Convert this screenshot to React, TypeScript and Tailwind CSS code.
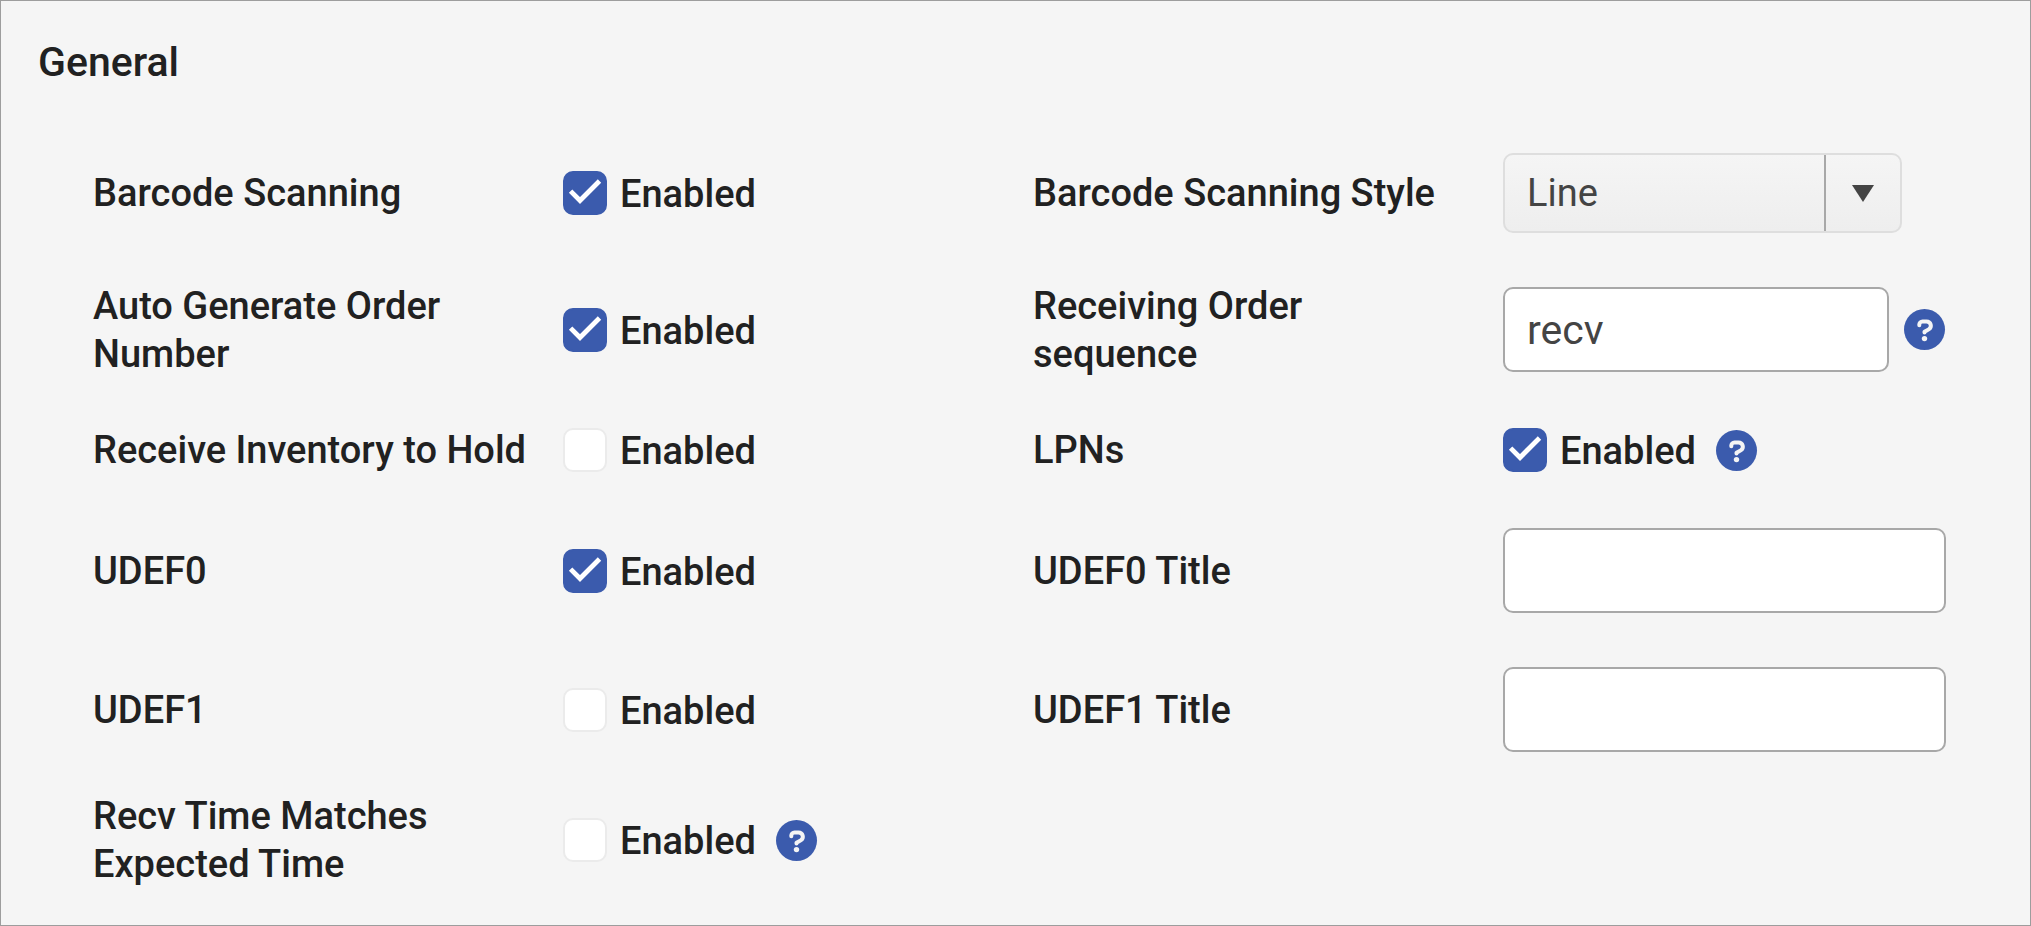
import React, { useId, useState } from 'react';

const inputClass =
  'h-[85px] w-full min-w-0 rounded-[10px] border-2 border-[#a8a8a8] bg-white px-[22px] text-[41px] font-normal text-[#444444] outline-none';

const HelpButton: React.FC = () => (
  <button type="button" aria-label="Help" className="shrink-0 cursor-pointer">
    <svg className="h-[41px] w-[42px]" viewBox="0 0 42 41" fill="none">
      <circle cx="20.5" cy="20.5" r="20.5" fill="#3b5bad" />
      <path
        d="M15.3 16.2v-.6a3.2 3.2 0 0 1 3.2-3.2h4a4.3 4.3 0 0 1 2.2 8L20.5 22.8v.8"
        stroke="#f4f4f4"
        strokeWidth="4"
        strokeLinecap="round"
        strokeLinejoin="round"
      />
      <circle cx="20.5" cy="29.6" r="2.7" fill="#f4f4f4" />
    </svg>
  </button>
);

interface CheckFieldProps {
  label: string;
  defaultChecked?: boolean;
  help?: boolean;
}

const CheckField: React.FC<CheckFieldProps> = ({ label, defaultChecked = false, help }) => {
  const id = useId();
  const [checked, setChecked] = useState(defaultChecked);

  return (
    <>
      <div className="py-[13px] pr-1">{label}</div>
      <div className="flex items-center gap-5 py-[26px]">
        <label htmlFor={id} className="flex cursor-pointer items-center gap-[13px]">
          <span className="grid shrink-0">
            <input
              id={id}
              type="checkbox"
              aria-label={label}
              checked={checked}
              onChange={() => setChecked(!checked)}
              className="col-start-1 row-start-1 h-11 w-11 cursor-pointer appearance-none rounded-[10px] border-2 border-[#ebebeb] bg-white checked:border-[#3b5bad] checked:bg-[#3b5bad]"
            />
            {checked && (
              <svg
                className="pointer-events-none col-start-1 row-start-1 h-11 w-11"
                viewBox="0 0 44 44"
                fill="none"
                stroke="white"
                strokeWidth="4.8"
              >
                <path d="M7.6 20.1 17 29.5 36.5 10" />
              </svg>
            )}
          </span>
          <span className="pt-0.5">Enabled</span>
        </label>
        {help && <HelpButton />}
      </div>
    </>
  );
};

interface TextFieldProps {
  label: string;
  defaultValue?: string;
  help?: boolean;
}

const TextField: React.FC<TextFieldProps> = ({ label, defaultValue = '', help }) => {
  const id = useId();

  return (
    <>
      <label htmlFor={id} className="py-[13px] pr-1">
        {label}
      </label>
      <div className="flex items-center gap-[15px] py-[27px]">
        <input id={id} type="text" defaultValue={defaultValue} className={inputClass} />
        {help && <HelpButton />}
      </div>
    </>
  );
};

interface SelectFieldProps {
  label: string;
  options: string[];
}

const SelectField: React.FC<SelectFieldProps> = ({ label, options }) => {
  const id = useId();

  return (
    <>
      <label htmlFor={id} className="py-[13px] pr-1">
        {label}
      </label>
      <div className="py-[27px]">
        <div className="relative h-20 w-[399px] max-w-full rounded-[10px] border-2 border-[#dedede] bg-gradient-to-b from-[#f5f5f5] to-[#eeeeee]">
          <select
            id={id}
            className="h-full w-full cursor-pointer appearance-none px-[22px] text-[38px] font-normal text-[#444444] outline-none"
          >
            {options.map((option) => (
              <option key={option}>{option}</option>
            ))}
          </select>
          <span className="pointer-events-none absolute inset-y-0 right-0 flex w-[76px] items-center justify-center border-l-2 border-[#a8a8a8]">
            <svg className="h-[17px] w-[22px]" viewBox="0 0 22 17" fill="#444444">
              <path d="M0 0h22L11 17z" />
            </svg>
          </span>
        </div>
      </div>
    </>
  );
};

export default function App() {
  return (
    <main className="min-h-screen border border-[#9d9d9d] bg-[#f5f5f5] pt-9 pr-[84px] pb-5 pl-[37px] font-['Roboto',sans-serif] text-[#212121]">
      <h2 className="text-[41px] leading-[50px] font-medium">General</h2>

      <form className="mt-[39px] grid grid-cols-4 items-center gap-x-[27px] pl-[55px] text-[38px] leading-[48px] font-medium">
        <CheckField label="Barcode Scanning" defaultChecked />
        <SelectField label="Barcode Scanning Style" options={['Line']} />

        <CheckField label="Auto Generate Order Number" defaultChecked />
        <TextField label="Receiving Order sequence" defaultValue="recv" help />

        <CheckField label="Receive Inventory to Hold" />
        <CheckField label="LPNs" defaultChecked help />

        <CheckField label="UDEF0" defaultChecked />
        <TextField label="UDEF0 Title" />

        <CheckField label="UDEF1" />
        <TextField label="UDEF1 Title" />

        <CheckField label="Recv Time Matches Expected Time" help />
      </form>
    </main>
  );
}
